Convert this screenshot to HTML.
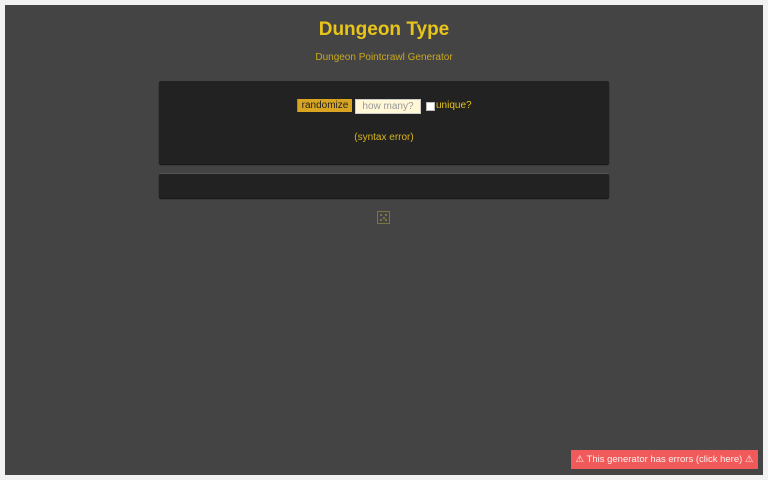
<!DOCTYPE html>
<html><head><style>
html,body{margin:0;padding:0;}
body{width:768px;height:480px;background:#f2f2f2;position:relative;overflow:hidden;font-family:"Liberation Sans",sans-serif;}
#main{position:absolute;left:5px;top:5px;width:758px;height:470px;background:#444;}
h1{position:absolute;top:14px;left:0;width:758px;text-align:center;margin:0;font-size:19px;font-weight:bold;color:#e8c51a;}
.sub{position:absolute;top:47px;left:0;width:758px;text-align:center;font-size:10px;color:#c9a81e;}
.box1{position:absolute;left:154px;top:76px;width:450px;height:83px;background:#222;border-radius:2px;box-shadow:0 1px 1px #111;}
.box2{position:absolute;left:154px;top:168px;width:450px;height:24px;background:#222;border-radius:2px;border-top:1px solid #555;box-shadow:0 1px 1px #111;}
.btn{position:absolute;left:292px;top:94px;width:54px;height:13px;background:#d9a520;color:#222;font-size:10px;text-align:center;line-height:13px;border-left:1px solid #888;}
.inp{position:absolute;left:350px;top:94px;width:64px;height:13px;background:#fff7d6;color:#999;font-size:10px;text-align:center;line-height:13px;border:1px solid #ccc;}
.cb{position:absolute;left:421px;top:97px;width:7px;height:7px;background:#fff;border:1px solid #bbb;}
.uq{position:absolute;left:431px;top:94px;font-size:10px;color:#e8c51a;line-height:13px;}
.err{position:absolute;left:0;width:758px;top:127px;text-align:center;font-size:10px;color:#d9b420;}
.dice{position:absolute;left:372px;top:206px;width:11px;height:11px;border:1px solid #7a7440;}
.dice i{position:absolute;width:2px;height:2px;background:#7a7440;}
.warn{position:absolute;left:566px;top:445px;width:187px;height:19px;background:#f05a5a;color:#fee;font-size:9.5px;line-height:19px;text-align:center;white-space:nowrap;overflow:hidden;}
</style></head><body>
<div id="main">
<h1>Dungeon Type</h1>
<div class="sub">Dungeon Pointcrawl Generator</div>
<div class="box1"></div>
<div class="box2"></div>
<div class="btn">randomize</div>
<div class="inp">how many?</div>
<div class="cb"></div>
<div class="uq">unique?</div>
<div class="err">(syntax error)</div>
<div class="dice"><i style="left:2px;top:2px"></i><i style="left:7px;top:2px"></i><i style="left:4.5px;top:4.5px"></i><i style="left:2px;top:7px"></i><i style="left:7px;top:7px"></i></div>
<div class="warn">⚠ This generator has errors (click here) ⚠</div>
</div>
</body></html>
